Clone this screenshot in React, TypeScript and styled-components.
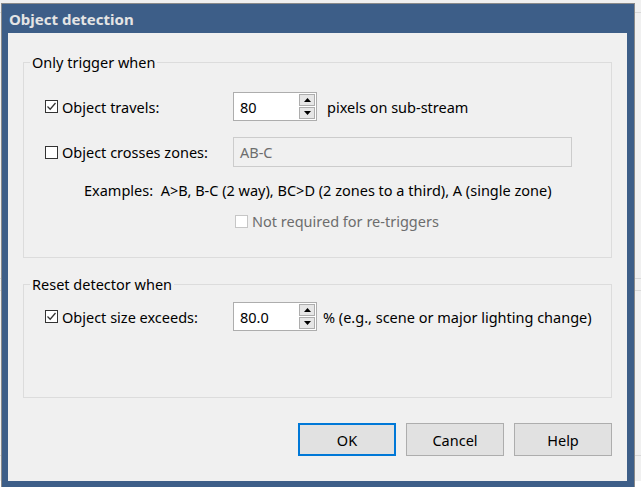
import React from 'react'
import styled, { createGlobalStyle } from 'styled-components'

const GlobalStyle = createGlobalStyle`
  html, body {
    margin: 0;
    padding: 0;
    width: 641px;
    height: 487px;
    overflow: hidden;
    background: #f0f0f0;
    font-family: "Noto Sans", "Open Sans", Arial, sans-serif;
  }
`

const frameBlue = '#3d5e88'

const Desktop = styled.div`
  position: relative;
  width: 641px;
  height: 487px;
  background: #f0f0f0;
  overflow: hidden;
`

const BehindRule = styled.div<{ top: number }>`
  position: absolute;
  left: 0;
  right: 0;
  top: ${({ top }) => top}px;
  height: 1px;
  background: #d8d8d8;
`

const BehindFooter = styled.div`
  position: absolute;
  left: 0;
  right: 0;
  top: 481px;
  height: 20px;
  background: #ffffff;
  display: flex;
  align-items: flex-start;
`

const BehindText = styled.div`
  font-size: 14px;
  line-height: 16px;
  color: #000;
  margin-top: -3px;
  padding-left: 3px;
  width: 325px;
`

const BehindButton = styled.div<{ w: number }>`
  width: ${({ w }) => w}px;
  height: 16px;
  margin-right: 14px;
  background: #e1e1e1;
  border: 1px solid #adadad;
`

const Window = styled.div`
  position: absolute;
  left: 1px;
  top: 3px;
  width: 619px;
  height: 477px;
  border: 1px solid #8a8a8a;
  background: ${frameBlue};
  display: flex;
  flex-direction: column;
  padding: 0 7px 6px 6px;
`

const TitleBar = styled.div`
  height: 29px;
  display: flex;
  align-items: center;
  padding-left: 1px;
  color: #e4e4e4;
  font-weight: bold;
  font-size: 15px;
`

const Client = styled.div`
  flex: 1;
  background: #f0f0f0;
  display: flex;
  flex-direction: column;
  padding: 19px 15px 0 15px;
  color: #000;
  font-size: 14.5px;
`

const Group = styled.fieldset<{ h: number; mt?: number }>`
  margin: ${({ mt }) => mt ?? 0}px 0 0 0;
  height: ${({ h }) => h}px;
  box-sizing: border-box;
  border: 1px solid #dcdcdc;
  padding: 0 0 0 21px;
  display: flex;
  flex-direction: column;
`

const Legend = styled.legend`
  padding: 0 2px;
  margin-left: -15px;
  line-height: 20px;
`

const Row = styled.div<{ mt: number }>`
  display: grid;
  grid-template-columns: 188px max-content max-content;
  justify-content: start;
  align-items: center;
  margin-top: ${({ mt }) => mt}px;
`

const CheckLabel = styled.label<{ disabled?: boolean }>`
  display: flex;
  align-items: center;
  gap: 4px;
  color: ${({ disabled }) => (disabled ? '#6d6d6d' : '#000')};
`

const Box = styled.span<{ disabled?: boolean }>`
  width: 13px;
  height: 13px;
  box-sizing: border-box;
  border: 1px solid ${({ disabled }) => (disabled ? '#c6c6c6' : '#333')};
  background: #fff;
  display: flex;
  align-items: center;
  justify-content: center;
`

const Spin = styled.div<{ w: number }>`
  width: ${({ w }) => w}px;
  height: 29px;
  box-sizing: border-box;
  border: 1px solid #adadad;
  background: #fff;
  display: flex;
`

const SpinValue = styled.div`
  flex: 1;
  display: flex;
  align-items: center;
  padding-left: 6px;
`

const SpinButtons = styled.div`
  width: 16px;
  display: flex;
  flex-direction: column;
  gap: 1px;
  padding: 1px 1px 1px 0;
`

const SpinBtn = styled.div`
  flex: 1;
  background: #e6e6e6;
  border: 1px solid #adadad;
  display: flex;
  align-items: center;
  justify-content: center;
`

const After = styled.span<{ ml: number }>`
  margin-left: ${({ ml }) => ml}px;
`

const TextField = styled.div`
  width: 339px;
  height: 30px;
  box-sizing: border-box;
  border: 1px solid #cccccc;
  background: #f0f0f0;
  color: #6d6d6d;
  display: flex;
  align-items: center;
  padding-left: 6px;
`

const Note = styled.div<{ ml: number; mt: number }>`
  margin-left: ${({ ml }) => ml}px;
  margin-top: ${({ mt }) => mt}px;
  line-height: 20px;
`

const Buttons = styled.div`
  display: flex;
  justify-content: flex-end;
  gap: 10px;
  margin-top: 25px;
`

const Button = styled.button<{ primary?: boolean }>`
  width: 98px;
  height: 33px;
  box-sizing: border-box;
  font-family: inherit;
  font-size: 14.5px;
  color: #000;
  background: #e1e1e1;
  border: ${({ primary }) => (primary ? '2px solid #0078d7' : '1px solid #adadad')};
  padding: 0;
`

const Check = ({ checked, disabled, children }: { checked?: boolean; disabled?: boolean; children: React.ReactNode }) => (
  <CheckLabel disabled={disabled}>
    <Box disabled={disabled}>
      {checked && (
        <svg width="11" height="11" viewBox="0 0 11 11">
          <path d="M1.5 5.5 L4.2 8.2 L9.5 2" fill="none" stroke="#333" strokeWidth="1.3" />
        </svg>
      )}
    </Box>
    {children}
  </CheckLabel>
)

const Arrow = ({ up }: { up?: boolean }) => (
  <svg width="7" height="4" viewBox="0 0 7 4">
    <path d={up ? 'M0 4 L3.5 0 L7 4 Z' : 'M0 0 L3.5 4 L7 0 Z'} fill="#000" />
  </svg>
)

const SpinEdit = ({ value, w }: { value: string; w: number }) => (
  <Spin w={w}>
    <SpinValue>{value}</SpinValue>
    <SpinButtons>
      <SpinBtn><Arrow up /></SpinBtn>
      <SpinBtn><Arrow /></SpinBtn>
    </SpinButtons>
  </Spin>
)

export default function App() {
  return (
    <>
      <GlobalStyle />
      <Desktop>
        <BehindRule top={12} />
        <BehindRule top={278} />
        <BehindRule top={290} />
        <BehindRule top={455} />
        <BehindFooter>
          <BehindText>Active Zone map: \Motion\2</BehindText>
          <BehindButton w={96} />
          <BehindButton w={96} />
          <BehindButton w={96} />
        </BehindFooter>
        <Window>
          <TitleBar>Object detection</TitleBar>
          <Client>
            <Group h={206}>
              <Legend>Only trigger when</Legend>
              <Row mt={20}>
                <Check checked>Object travels:</Check>
                <SpinEdit value="80" w={84} />
                <After ml={10}>pixels on sub-stream</After>
              </Row>
              <Row mt={16}>
                <Check>Object crosses zones:</Check>
                <TextField>AB-C</TextField>
              </Row>
              <Note ml={39} mt={13}>
                Examples:&nbsp; A&gt;B, B-C (2 way), BC&gt;D (2 zones to a third), A (single zone)
              </Note>
              <Note ml={190} mt={11}>
                <Check disabled>Not required for re-triggers</Check>
              </Note>
            </Group>
            <Group h={124} mt={16}>
              <Legend>Reset detector when</Legend>
              <Row mt={8}>
                <Check checked>Object size exceeds:</Check>
                <SpinEdit value="80.0" w={84} />
                <After ml={6}>% (e.g., scene or major lighting change)</After>
              </Row>
            </Group>
            <Buttons>
              <Button primary>OK</Button>
              <Button>Cancel</Button>
              <Button>Help</Button>
            </Buttons>
          </Client>
        </Window>
      </Desktop>
    </>
  )
}
